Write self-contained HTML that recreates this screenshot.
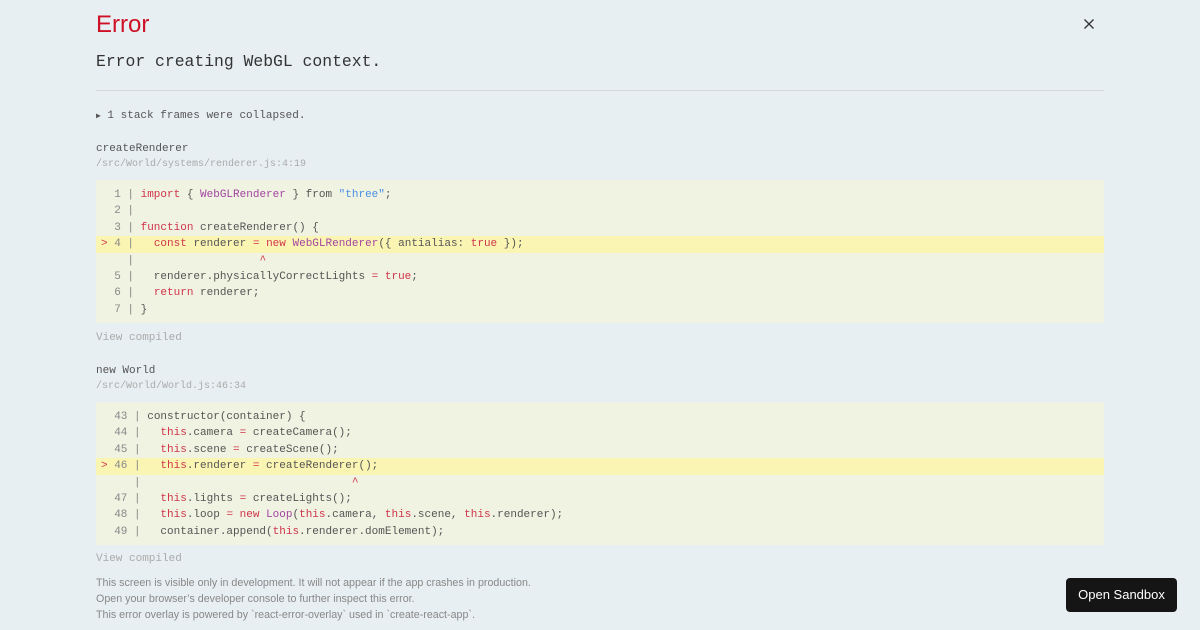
<!DOCTYPE html>
<html><head><meta charset="utf-8"><style>
body{margin:0;width:1200px;height:630px;background:#e8eff2;position:relative;overflow:hidden;font-family:"Liberation Mono",monospace;}
.a{position:absolute;white-space:pre;}
.code{position:absolute;left:96px;width:1008px;background:#f0f2e2;}
.ln{position:absolute;left:0;width:1008px;height:16.4px;line-height:16.4px;font-size:11px;color:#555;white-space:pre;padding-left:5px;box-sizing:border-box;}
.hl{background:#fbf5b4;}
.k{color:#d0344a}.p{color:#a245a0}.s{color:#4a90e2}.g{color:#888}
.sans{font-family:"Liberation Sans",sans-serif;}
</style></head><body>
<div class="a sans" style="left:96px;top:11px;font-size:24px;color:#ce1126;">Error</div>
<svg style="position:absolute;left:1080px;top:15px" width="18" height="18" viewBox="0 0 18 18"><path d="M4.5 4.5L13.5 13.5M13.5 4.5L4.5 13.5" stroke="#333" stroke-width="1.3"/></svg>
<div class="a" style="left:96px;top:52px;font-size:16.4px;color:#333;">Error creating WebGL context.</div>
<div class="a" style="left:96px;top:90px;width:1008px;height:1px;background:#d6dadc;"></div>
<div class="a" style="left:96px;top:110px;font-size:11px;color:#555;"><span style="font-size:8px">▶</span> 1 stack frames were collapsed.</div>
<div class="a" style="left:96px;top:143px;font-size:11px;color:#555;">createRenderer</div>
<div class="a" style="left:96px;top:159px;font-size:10px;color:#aaa;">/src/World/systems/renderer.js:4:19</div>
<div class="code" style="top:180px;height:143px;">
<div class="ln" style="top:7px"><span class="g">  1 | </span><span class="k">import</span> { <span class="p">WebGLRenderer</span> } from <span class="s">"three"</span>;</div>
<div class="ln" style="top:23.4px"><span class="g">  2 | </span></div>
<div class="ln" style="top:39.8px"><span class="g">  3 | </span><span class="k">function</span> createRenderer() {</div>
<div class="ln hl" style="top:56.2px"><span class="k">&gt;</span><span class="g"> 4 | </span>  <span class="k">const</span> renderer <span class="k">=</span> <span class="k">new</span> <span class="p">WebGLRenderer</span>({ antialias: <span class="k">true</span> });</div>
<div class="ln" style="top:72.6px"><span class="g">    |                   </span><span class="k">^</span></div>
<div class="ln" style="top:89px"><span class="g">  5 | </span>  renderer.physicallyCorrectLights <span class="k">=</span> <span class="k">true</span>;</div>
<div class="ln" style="top:105.4px"><span class="g">  6 | </span>  <span class="k">return</span> renderer;</div>
<div class="ln" style="top:121.8px"><span class="g">  7 | </span>}</div>
</div>
<div class="a" style="left:96px;top:332px;font-size:11px;color:#aaa;">View compiled</div>
<div class="a" style="left:96px;top:365px;font-size:11px;color:#555;">new World</div>
<div class="a" style="left:96px;top:381px;font-size:10px;color:#aaa;">/src/World/World.js:46:34</div>
<div class="code" style="top:402px;height:143px;">
<div class="ln" style="top:7px"><span class="g">  43 | </span>constructor(container) {</div>
<div class="ln" style="top:23.4px"><span class="g">  44 | </span>  <span class="k">this</span>.camera <span class="k">=</span> createCamera();</div>
<div class="ln" style="top:39.8px"><span class="g">  45 | </span>  <span class="k">this</span>.scene <span class="k">=</span> createScene();</div>
<div class="ln hl" style="top:56.2px"><span class="k">&gt;</span><span class="g"> 46 | </span>  <span class="k">this</span>.renderer <span class="k">=</span> createRenderer();</div>
<div class="ln" style="top:72.6px"><span class="g">     |                                </span><span class="k">^</span></div>
<div class="ln" style="top:89px"><span class="g">  47 | </span>  <span class="k">this</span>.lights <span class="k">=</span> createLights();</div>
<div class="ln" style="top:105.4px"><span class="g">  48 | </span>  <span class="k">this</span>.loop <span class="k">=</span> <span class="k">new</span> <span class="p">Loop</span>(<span class="k">this</span>.camera, <span class="k">this</span>.scene, <span class="k">this</span>.renderer);</div>
<div class="ln" style="top:121.8px"><span class="g">  49 | </span>  container.append(<span class="k">this</span>.renderer.domElement);</div>
</div>
<div class="a" style="left:96px;top:553px;font-size:11px;color:#aaa;">View compiled</div>
<div class="a sans" style="left:96px;top:575px;font-size:10.7px;line-height:16px;color:#888;">This screen is visible only in development. It will not appear if the app crashes in production.
Open your browser’s developer console to further inspect this error.
This error overlay is powered by `react-error-overlay` used in `create-react-app`.</div>
<div class="a sans" style="left:1066px;top:578px;width:111px;height:34px;background:#151515;border-radius:4px;color:#fff;font-size:13px;line-height:34px;text-align:center;">Open Sandbox</div>
</body></html>
